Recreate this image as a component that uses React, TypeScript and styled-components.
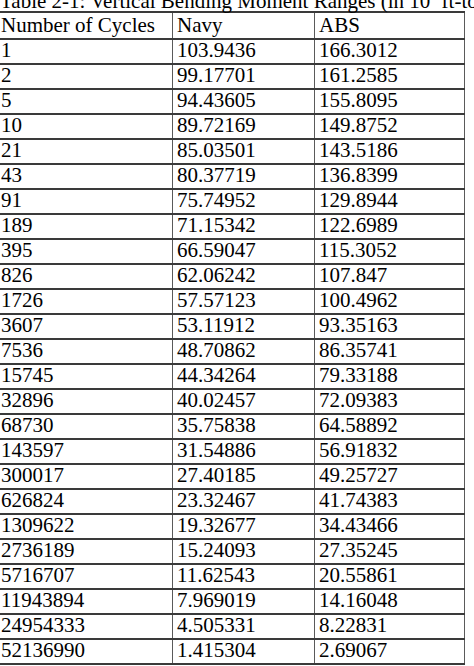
import React from 'react';
import styled, { createGlobalStyle } from 'styled-components';

const GlobalStyle = createGlobalStyle`
  html, body {
    margin: 0;
    padding: 0;
    background: #fff;
    overflow: hidden;
  }
  body {
    font-family: "Liberation Serif", "Times New Roman", serif;
    color: #000;
  }
`;

const Page = styled.div`
  width: 474px;
  height: 666px;
  overflow: hidden;
`;

const Caption = styled.div`
  font-size: 21px;
  line-height: 20px;
  height: 20px;
  margin-top: -9px;
  white-space: nowrap;

  sup {
    font-size: 12px;
    line-height: 0;
    vertical-align: 8px;
  }
`;

const Table = styled.table`
  border-collapse: collapse;
  margin-left: -4px;
  table-layout: fixed;
  font-size: 21px;
`;

const Cell = styled.td<{ $w: number; $head?: boolean }>`
  width: ${(p) => p.$w}px;
  padding: ${(p) => (p.$head ? '2px 4px 3px' : '0 4px 3px')};
  line-height: 20px;
  border-top: 2px solid #3a3a3a;
  border-bottom: 2px solid #3a3a3a;
  border-left: 1px solid #5a5a5a;
  border-right: 1px solid #5a5a5a;
  font-weight: 400;
  white-space: nowrap;
  overflow: hidden;
  text-align: left;
  vertical-align: top;
`;

// content widths; with padding the columns fall at x = 172, 314, 464
const widths = [167, 133, 141];

const rows: [string, string, string][] = [
  ['1', '103.9436', '166.3012'],
  ['2', '99.17701', '161.2585'],
  ['5', '94.43605', '155.8095'],
  ['10', '89.72169', '149.8752'],
  ['21', '85.03501', '143.5186'],
  ['43', '80.37719', '136.8399'],
  ['91', '75.74952', '129.8944'],
  ['189', '71.15342', '122.6989'],
  ['395', '66.59047', '115.3052'],
  ['826', '62.06242', '107.847'],
  ['1726', '57.57123', '100.4962'],
  ['3607', '53.11912', '93.35163'],
  ['7536', '48.70862', '86.35741'],
  ['15745', '44.34264', '79.33188'],
  ['32896', '40.02457', '72.09383'],
  ['68730', '35.75838', '64.58892'],
  ['143597', '31.54886', '56.91832'],
  ['300017', '27.40185', '49.25727'],
  ['626824', '23.32467', '41.74383'],
  ['1309622', '19.32677', '34.43466'],
  ['2736189', '15.24093', '27.35245'],
  ['5716707', '11.62543', '20.55861'],
  ['11943894', '7.969019', '14.16048'],
  ['24954333', '4.505331', '8.22831'],
  ['52136990', '1.415304', '2.69067'],
];

const header = ['Number of Cycles', 'Navy', 'ABS'];

const App: React.FC = () => {
  return (
    <Page>
      <GlobalStyle />
      <Caption>
        Table 2-1: Vertical Bending Moment Ranges (in 10<sup>6</sup> ft-tons)
      </Caption>
      <Table>
        <thead>
          <tr>
            {header.map((h, i) => (
              <Cell as="th" key={h} $w={widths[i]} $head>
                {h}
              </Cell>
            ))}
          </tr>
        </thead>
        <tbody>
          {rows.map((r) => (
            <tr key={r[0]}>
              {r.map((v, i) => (
                <Cell key={i} $w={widths[i]}>
                  {v}
                </Cell>
              ))}
            </tr>
          ))}
        </tbody>
      </Table>
    </Page>
  );
};

export default App;
